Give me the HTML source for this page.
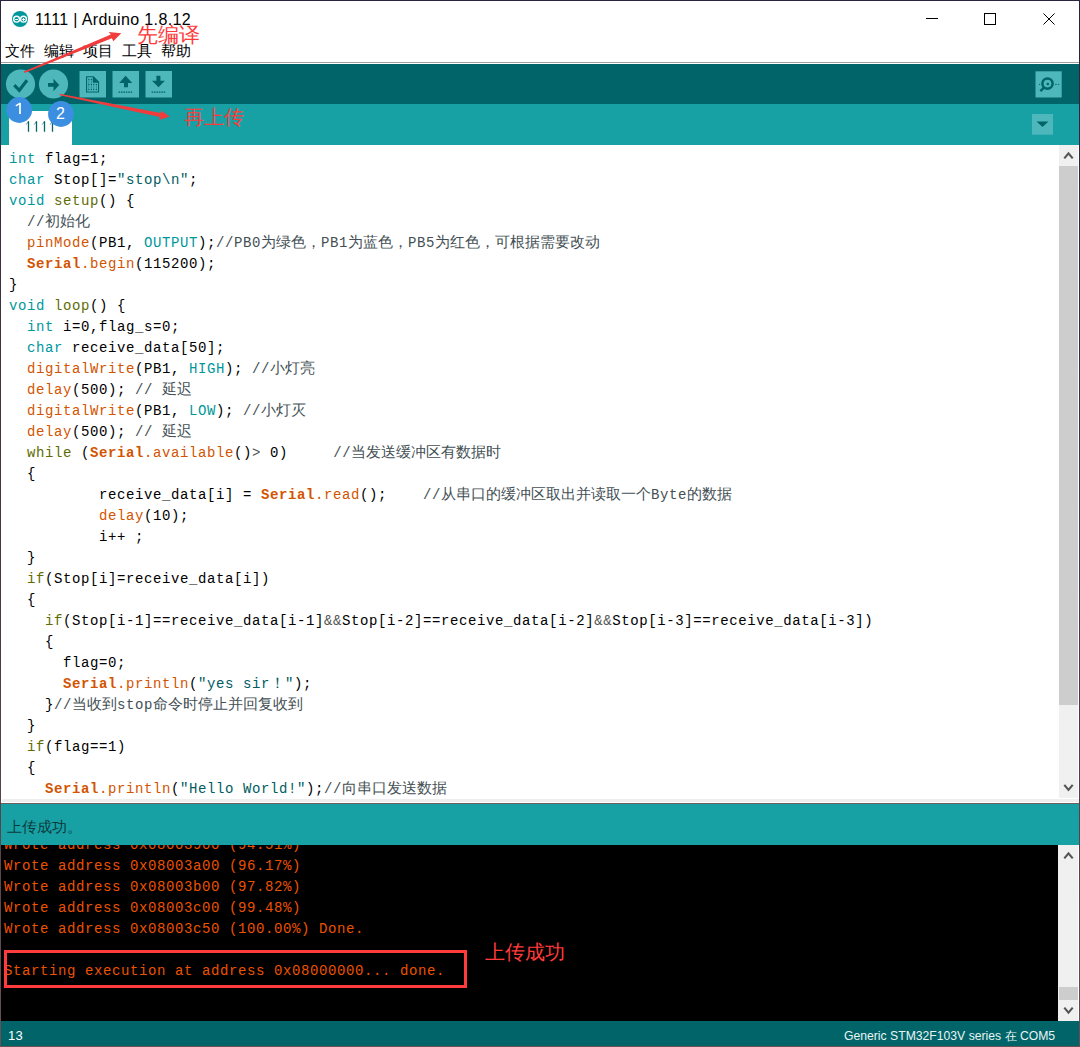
<!DOCTYPE html>
<html><head><meta charset="utf-8">
<style>
html,body{margin:0;padding:0;}
body{width:1080px;height:1047px;overflow:hidden;position:relative;background:#fff;font-family:"Liberation Sans",sans-serif;}
.abs{position:absolute;}
#bl{left:0;top:0;width:1px;height:1047px;background:linear-gradient(#2b2240,#42313f 30%,#4a3a44 60%,#6b5050);}
#bt{left:0;top:0;width:1080px;height:1px;background:#2b2240;}
#br{left:1079px;top:0;width:1px;height:1047px;background:linear-gradient(#2b2240,#3a2f48 40%,#4a3c4c 70%,#5e5058);}
#bb{left:0;top:1046px;width:1080px;height:1px;background:#6b5254;}
#title{left:35px;top:11px;letter-spacing:0.37px;font-size:16px;color:#000;white-space:nowrap;}
.menu{top:42px;font-size:15px;color:#000;white-space:nowrap;}
#sep{left:1px;top:62px;width:1078px;height:1px;background:#a0a0a0;}
#toolbar{left:1px;top:64px;width:1078px;height:40px;background:#006468;}
#tabbar{left:1px;top:104px;width:1078px;height:41px;background:#17a1a5;}
#tab{left:9px;top:111px;width:63px;height:34px;background:#fff;}
#tabtxt{left:25px;top:117px;font-size:15px;letter-spacing:-0.5px;color:#006468;}
#editor{left:1px;top:145px;width:1058px;height:653px;background:#fff;}
#code{left:8px;top:4px;font-family:"Liberation Mono",monospace;font-size:14.0px;letter-spacing:0.600px;color:#000;}
.k{color:#00979c}.s{color:#5e6d03}.f{color:#d35400}.b{color:#d35400;font-weight:bold}.q{color:#005c5f}.c{color:#434f54}.o{color:#555}
#vscroll{left:1059px;top:145px;width:19px;height:653px;background:#f0f0f0;}
#vthumb{left:1059px;top:166px;width:19px;height:539px;background:#cdcdcd;}
#hstrip{left:2px;top:799px;width:1077px;height:3px;background:#eeeeee;}
#hline{left:1px;top:803px;width:1078px;height:1px;background:#6b5f5f;}
#status{left:1px;top:804px;width:1078px;height:41px;background:#17a1a5;}
#stxt{left:7px;top:818px;font-size:15px;color:#0b3a3c;}
#console{left:1px;top:845px;width:1057px;height:176px;background:#000;overflow:hidden;}
#ctext{left:3px;top:-10px;font-family:"Liberation Mono",monospace;font-size:14.0px;letter-spacing:0.600px;line-height:21px;white-space:pre;color:#ec5200;}
#cscroll{left:1058px;top:845px;width:20px;height:176px;background:#f0f0f0;}
#cthumb{left:1059px;top:987px;width:19px;height:13px;background:#cdcdcd;}
#footer{left:1px;top:1021px;width:1078px;height:25px;background:#006468;}
#ftl{left:8px;top:1028px;font-size:13px;letter-spacing:0.3px;color:#fff;}
#ftr{left:844px;top:1028px;font-size:12.2px;color:#e8f4f4;white-space:nowrap;}
.red{color:#ff3b3b;font-size:20px;white-space:nowrap;}

.ln{height:21px;line-height:21px;white-space:pre;}
.z{font-size:15px;letter-spacing:0;}
</style></head><body>
<div class="abs" id="title">1111 | Arduino 1.8.12</div>
<svg class="abs" style="left:0;top:0" width="1080" height="63">
  <circle cx="20" cy="19" r="8" fill="#00979c"/>
  <g fill="none" stroke="#fff" stroke-width="1.4">
    <circle cx="16.6" cy="19.2" r="2.9"/><circle cx="23.5" cy="19.2" r="2.9"/>
  </g>
  <path d="M15.1 19.5h2.9M22.1 19.5h2.9M23.5 18v2.9" stroke="#fff" stroke-width="1.1"/>
  <path d="M926 18.5h12" stroke="#000" stroke-width="1"/>
  <rect x="984.5" y="13.5" width="11" height="11" fill="none" stroke="#000" stroke-width="1"/>
  <path d="M1043.5 13.5l11 11M1054.5 13.5l-11 11" stroke="#000" stroke-width="1"/>
</svg>
<div class="abs menu" style="left:5px">文件</div>
<div class="abs menu" style="left:44px">编辑</div>
<div class="abs menu" style="left:83px">项目</div>
<div class="abs menu" style="left:122px">工具</div>
<div class="abs menu" style="left:161px">帮助</div>
<div class="abs" id="sep"></div>
<div class="abs" id="toolbar"></div>
<div class="abs" id="tabbar"></div>
<svg class="abs" style="left:0;top:63px" width="1080" height="82">
  <g transform="translate(0,-63)">
  <circle cx="20.5" cy="84" r="14.6" fill="#4db7bb"/>
  <path d="M14.3 85.2L19.3 90.3L27 80.3" fill="none" stroke="#006468" stroke-width="3.1"/>
  <circle cx="53.5" cy="84" r="14.6" fill="#4db7bb"/>
  <path d="M48 83h5.5v-4.2L59.2 85L53.5 91.2v-4.4H48z" fill="#006468"/>
  <rect x="79.5" y="71" width="26.5" height="26.5" fill="#4db7bb"/>
  <rect x="112.5" y="71" width="26.5" height="26.5" fill="#4db7bb"/>
  <rect x="145.5" y="71" width="26.5" height="26.5" fill="#4db7bb"/>
  <!-- new doc icon -->
  <path d="M86 76.2h7.6l5.5 5.5v10.9H86z" fill="#006468"/>
  <path d="M87.1 77.3h5.7v5.5h5.2v8.7H87.1z" fill="#4db7bb"/>
  <g fill="#006468">
    <rect x="88.2" y="78.9" width="1.1" height="1.1"/><rect x="90.9" y="78.9" width="1.1" height="1.1"/>
    <rect x="88.2" y="83.9" width="1.1" height="1.1"/><rect x="90.9" y="83.9" width="1.1" height="1.1"/>
    <rect x="93.1" y="83.9" width="1.1" height="1.1"/><rect x="95.9" y="83.9" width="1.1" height="1.1"/>
    <rect x="88.2" y="89" width="1.1" height="1.1"/><rect x="90.9" y="89" width="1.1" height="1.1"/>
    <rect x="93.1" y="89" width="1.1" height="1.1"/><rect x="95.9" y="89" width="1.1" height="1.1"/>
  </g>
  <g fill="#006468" opacity="0.35">
    <rect x="88.2" y="80" width="1.1" height="3.9"/><rect x="90.9" y="80" width="1.1" height="3.9"/>
    <rect x="88.2" y="85" width="1.1" height="4"/><rect x="90.9" y="85" width="1.1" height="4"/>
    <rect x="93.1" y="85" width="1.1" height="4"/><rect x="95.9" y="85" width="1.1" height="4"/>
    <rect x="89.3" y="79.2" width="1.6" height="0.5"/><rect x="89.3" y="84.2" width="1.6" height="0.5"/><rect x="94.2" y="84.2" width="1.7" height="0.5"/>
    <rect x="89.3" y="89.3" width="1.6" height="0.5"/><rect x="94.2" y="89.3" width="1.7" height="0.5"/>
  </g>
  <!-- open icon up arrow -->
  <path d="M125.6 75.7L132.2 83H128v4.3h-4v-4.3h-4.8z" fill="#006468"/>
  <path d="M118.6 92.2h14" stroke="#006468" stroke-width="1.2" stroke-dasharray="1.6 0.8"/>
  <!-- save icon down arrow -->
  <path d="M156.4 75.7h4v5.1h4.5L158.5 87.3L152 80.8h4.4z" fill="#006468"/>
  <path d="M151.6 92.2h14" stroke="#006468" stroke-width="1.2" stroke-dasharray="1.6 0.8"/>
  <!-- serial monitor -->
  <rect x="1035.5" y="71.3" width="26.2" height="26.2" fill="#4db7bb"/>
  <circle cx="1047.5" cy="83.6" r="5.1" fill="none" stroke="#006468" stroke-width="2.5"/>
  <circle cx="1047.8" cy="84" r="1.3" fill="#006468"/>
  <path d="M1044.2 87.3l-3.8 3.8" stroke="#006468" stroke-width="2.6"/>
  <path d="M1039 84.4h1.2M1055.2 84.4h1.4M1057.9 84.4h1.2" stroke="#006468" stroke-width="1"/>
  <!-- tab dropdown -->
  <rect x="1032" y="114" width="21" height="20.7" fill="#4db7bb"/>
  <path d="M1036.5 121.5h12l-6 5.5z" fill="#006468"/>
  </g>
</svg>
<div class="abs" id="tab"></div>
<svg class="abs" style="left:0;top:0" width="80" height="145"><g stroke="#006468" fill="none">
<path d="M28.5 121.3V131.8M36.5 121.3V131.8M44.5 121.3V131.8M52.5 121.3V131.8" stroke-width="1.3"/>
<path d="M28.2 121.6L26.2 124.6M36.2 121.6L34.2 124.6M44.2 121.6L42.2 124.6M52.2 121.6L50.2 124.6" stroke-width="1" opacity="0.6"/>
</g></svg>
<div class="abs" id="editor"></div>
<div class="abs" id="edclip" style="left:1px;top:145px;width:1058px;height:653px;overflow:hidden"><div class="abs" id="code"><div class="ln"><span class="k">int</span> flag=1;</div><div class="ln"><span class="k">char</span> Stop[]=<span class="q">"stop\n"</span>;</div><div class="ln"><span class="k">void</span> <span class="s">setup</span>() {</div><div class="ln">  <span class="c">//<span class="z">初始化</span></span></div><div class="ln">  <span class="f">pinMode</span>(PB1, <span class="k">OUTPUT</span>);<span class="c">//PB0<span class="z">为绿色，</span>PB1<span class="z">为蓝色，</span>PB5<span class="z">为红色，可根据需要改动</span></span></div><div class="ln">  <span class="b">Serial</span><span class="f">.begin</span>(115200);</div><div class="ln">}</div><div class="ln"><span class="k">void</span> <span class="s">loop</span>() {</div><div class="ln">  <span class="k">int</span> i=0,flag_s=0;</div><div class="ln">  <span class="k">char</span> receive_data[50];</div><div class="ln">  <span class="f">digitalWrite</span>(PB1, <span class="k">HIGH</span>); <span class="c">//<span class="z">小灯亮</span></span></div><div class="ln">  <span class="f">delay</span>(500); <span class="c">// <span class="z">延迟</span></span></div><div class="ln">  <span class="f">digitalWrite</span>(PB1, <span class="k">LOW</span>); <span class="c">//<span class="z">小灯灭</span></span></div><div class="ln">  <span class="f">delay</span>(500); <span class="c">// <span class="z">延迟</span></span></div><div class="ln">  <span class="s">while</span> (<span class="b">Serial</span><span class="f">.available</span>()<span class="o">&gt;</span> 0)     <span class="c">//<span class="z">当发送缓冲区有数据时</span></span></div><div class="ln">  {</div><div class="ln">          receive_data[i] = <span class="b">Serial</span><span class="f">.read</span>();    <span class="c">//<span class="z">从串口的缓冲区取出并读取一个</span>Byte<span class="z">的数据</span></span></div><div class="ln">          <span class="f">delay</span>(10);</div><div class="ln">          i++ ;</div><div class="ln">  }</div><div class="ln">  <span class="s">if</span>(Stop[i]=receive_data[i])</div><div class="ln">  {</div><div class="ln">    <span class="s">if</span>(Stop[i-1]==receive_data[i-1]<span class="o">&amp;&amp;</span>Stop[i-2]==receive_data[i-2]<span class="o">&amp;&amp;</span>Stop[i-3]==receive_data[i-3])</div><div class="ln">    {</div><div class="ln">      flag=0;</div><div class="ln">      <span class="b">Serial</span><span class="f">.println</span>(<span class="q">"yes sir<span class="z">！</span>"</span>);</div><div class="ln">    }<span class="c">//<span class="z">当收到</span>stop<span class="z">命令时停止并回复收到</span></span></div><div class="ln">  }</div><div class="ln">  <span class="s">if</span>(flag==1)</div><div class="ln">  {</div><div class="ln">    <span class="b">Serial</span><span class="f">.println</span>(<span class="q">"Hello World!"</span>);<span class="c">//<span class="z">向串口发送数据</span></span></div><div class="ln">  }</div><div class="ln">}</div><!--codeend--></div></div>
<div class="abs" id="vscroll"></div>
<div class="abs" id="vthumb"></div>
<div class="abs" id="hstrip"></div>
<div class="abs" id="hline"></div>
<div class="abs" id="status"></div>
<div class="abs" id="stxt">上传成功。</div>
<div class="abs" id="console"><div class="abs" id="ctext">Wrote address 0x08003900 (94.51%)
Wrote address 0x08003a00 (96.17%)
Wrote address 0x08003b00 (97.82%)
Wrote address 0x08003c00 (99.48%)
Wrote address 0x08003c50 (100.00%) Done.

Starting execution at address 0x08000000... done.</div></div>
<div class="abs" id="cscroll"></div>
<div class="abs" id="cthumb"></div>
<div class="abs" id="footer"></div>
<div class="abs" id="ftl">13</div>
<div class="abs" id="ftr">Generic STM32F103V series 在 COM5</div>
<svg class="abs" style="left:0;top:0" width="1080" height="1047">
  <!-- scrollbar arrows -->
  <g fill="none" stroke="#555" stroke-width="2.1">
  <path d="M1064.3 158.4L1068.5 153.3L1072.7 158.4"/>
  <path d="M1064.3 784.8L1068.5 789.9L1072.7 784.8"/>
  <path d="M1064.3 858.4L1068.5 853.3L1072.7 858.4"/>
  <path d="M1064.3 1007.6L1068.5 1012.7L1072.7 1007.6"/>
  </g>
  <!-- badges -->
  <circle cx="19.2" cy="110" r="12.9" fill="#3c8fe0"/>
  <circle cx="61" cy="114" r="12.9" fill="#3c8fe0"/>
  <!-- arrows -->
  <g fill="#f03c3c" stroke="none">
    <path d="M23.8 71.6L110.9 34.6L108.6 32.1L121.3 33.3L113.3 41.2L111.9 38.3L24.6 73.1z"/>
    <path d="M59.8 93.8L160.8 112.9L161.3 110.8L169.8 116.5L159.1 119.9L159.7 116.9L59.8 95.3z"/>
  </g>
  <!-- red box -->
  <rect x="5.5" y="951.5" width="460" height="35" fill="none" stroke="#ff3b3b" stroke-width="3"/>
</svg>
<svg class="abs" style="left:0;top:0" width="40" height="130"><path d="M20 102.9V113.9" stroke="#fff" stroke-width="1.7"/><path d="M20.3 103.2L15.8 105.9" stroke="#fff" stroke-width="1.5"/></svg>
<div class="abs" style="left:56px;top:105px;font-size:16px;color:#fff;">2</div>
<div class="abs red" style="left:137px;top:21px;font-size:21px">先编译</div>
<div class="abs red" style="left:184px;top:104px;">再上传</div>
<div class="abs red" style="left:485px;top:939px;">上传成功</div>
<div class="abs" id="bl"></div><div class="abs" id="bt"></div><div class="abs" id="br"></div><div class="abs" id="bb"></div>
</body></html>
